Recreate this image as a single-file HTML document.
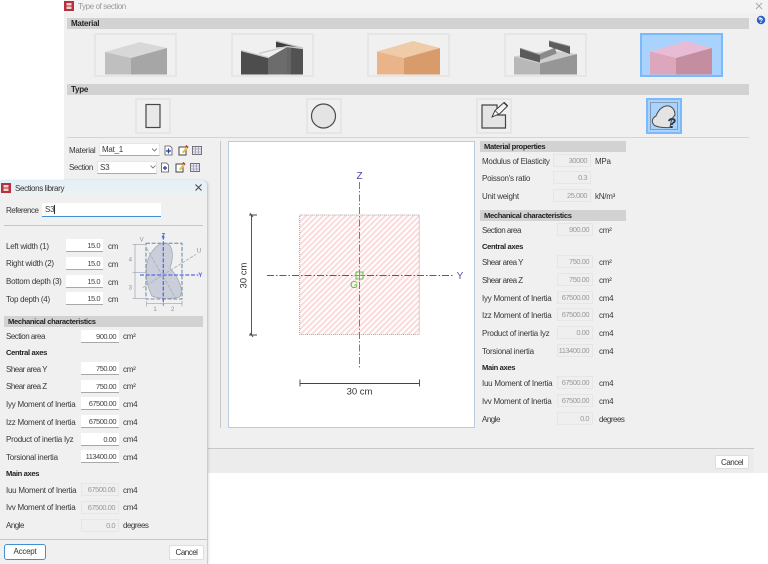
<!DOCTYPE html>
<html><head><meta charset="utf-8"><style>
html,body{margin:0;padding:0;background:#fff;width:768px;height:564px;overflow:hidden}
body{position:relative;font-family:"Liberation Sans",sans-serif;font-size:8px;letter-spacing:-.25px;color:#383838}
div,span{position:absolute;box-sizing:border-box;white-space:nowrap}
.t{line-height:12px;height:12px;margin-top:1px}
.s{letter-spacing:-.5px}
.n{letter-spacing:-.5px}
.b{font-weight:bold;color:#222;font-size:7.6px;letter-spacing:-.35px}
.bar{background:#d2d2d2;font-weight:bold;color:#222;line-height:11px;height:11px;padding-left:4px;font-size:7.6px;letter-spacing:-.35px}
.i{background:#fff;height:13px;line-height:13px;text-align:right;padding-right:3px;border-bottom:1px solid #a8a8a8;color:#444;font-size:7.5px;letter-spacing:-.5px}
.d{background:#efefef;height:13px;line-height:12px;text-align:right;padding-right:3px;border:1px solid #e6e6e6;color:#999;font-size:7.5px;letter-spacing:-.5px}
.tile{border:2px solid #e6e6e6;width:83px;height:44px;top:33px}
.tb{border:2px solid #e6e6e6;width:36px;height:36px;top:98px}
.btn{background:#fff;border:1px solid #ddd;border-radius:2px;text-align:center;color:#333;letter-spacing:-.5px}
svg{position:absolute;overflow:visible;letter-spacing:0}
</style></head><body>
<div id="main" style="left:64px;top:0;width:704px;height:473px;background:#f0f0f0"></div>
<div style="left:64px;top:0;width:704px;height:13px;background:#f3f3f3"></div>
<div class="t" style="left:78px;top:0;color:#999;letter-spacing:-.4px">Type of section</div>
<svg style="left:64px;top:1px" width="10" height="10"><rect width="10" height="10" fill="#b8303c"/><rect x="2.500" y="2" width="5" height="2.500" fill="#f0d0d0"/><rect x="2.500" y="5.500" width="5" height="2.500" fill="#f0d0d0"/></svg>
<svg style="left:755px;top:1px" width="10" height="10"><path d="M1 2l6 6M7 2l-6 6" stroke="#aaa" fill="none"/></svg>
<svg style="left:756px;top:15px" width="10" height="10"><circle cx="5" cy="5" r="4.200" fill="#2a5fc8"/><circle cx="4" cy="3.500" r="1.500" fill="#9cc0f5"/><text x="5" y="8" font-size="7" font-weight="bold" text-anchor="middle" fill="#fff" font-family="Liberation Sans">?</text></svg>

<div class="bar" style="left:67px;top:18px;width:682px;font-size:8px;letter-spacing:-.25px">Material</div>
<div class="bar" style="left:67px;top:84px;width:682px;font-size:8px;letter-spacing:-.25px">Type</div>

<div class="tile" style="left:94px"></div>
<div class="tile" style="left:231px"></div>
<div class="tile" style="left:367px"></div>
<div class="tile" style="left:504px"></div>
<div class="tile" style="left:640px;background:#a9d3fd;border-color:#7cb9fb"></div>

<svg style="left:0;top:0" width="768" height="140">
<polygon points="105,52 140,42 167,48 131,58" fill="#d8d8d8"/><polygon points="105,52 131,58 131,74.500 105,74.500" fill="#bfbfbf"/><polygon points="131,58 167,48 167,74.500 131,74.500" fill="#a6a6a6"/>

<polygon points="276,41.500 303,48.500 287,46.500 276,47.500" fill="#3f3f3f"/>
<polygon points="268,58 287,47 287,74.500 268,74.500" fill="#6c6c6c"/>
<polygon points="241,51 268,58 268,74.500 241,74.500" fill="#4d4d4d"/>
<polygon points="287,47 303,49 303,74.500 287,74.500" fill="#525252"/><rect x="287" y="47" width="4" height="27.500" fill="#666"/>
<path d="M241 50.500L268 57.500M259 53.500L287 46.500L303 48.500M276 41L303 48" stroke="#c8c8c8" stroke-width="1.200" fill="none"/>

<polygon points="377,51.500 413,41 440,48 404,58" fill="#f0cba8"/><polygon points="377,51.500 404,58 404,74.500 377,74.500" fill="#eab48a"/><polygon points="404,58 440,48 440,74.500 404,74.500" fill="#d89c6c"/>

<polygon points="514,56.500 550,50 577,54 540,63.500" fill="#cecece"/><polygon points="514,56.500 540,63.500 540,74.500 514,74.500" fill="#b8b8b8"/><polygon points="540,63.500 577,54 577,74.500 540,74.500" fill="#969696"/>
<polygon points="540,54 555,47.500 556.500,53.500 540,60" fill="#8a8a8a"/>
<polygon points="520,48.500 540,55 540,62.500 520,57" fill="#5a5a5a"/>
<polygon points="549,41 570,46.500 570,54 549,46.500" fill="#5c5c5c"/>
<path d="M520 48.200L540 54.700M549 40.800L570 46.300" stroke="#999" stroke-width="1" fill="none"/>

<polygon points="650,51.500 686,41 712,48 676,58" fill="#e8bcd4"/><polygon points="650,51.500 676,58 676,74.500 650,74.500" fill="#dca6bc"/><polygon points="676,58 712,48 712,74.500 676,74.500" fill="#c58da0"/>
</svg>

<div class="tb" style="left:135px"></div>
<div class="tb" style="left:306px"></div>
<div class="tb" style="left:476px"></div>
<div class="tb" style="left:646px;background:#a9d3fd;border-color:#7cb9fb"></div>

<svg style="left:0;top:0" width="768" height="140">
<rect x="146" y="104.500" width="14" height="23" fill="#e8e8e8" stroke="#4a4540" stroke-width="1.200"/>
<circle cx="323.500" cy="116" r="12" fill="#e4e4e4" stroke="#4a4a48" stroke-width="1.200"/>
<path d="M482 105H497V115H505.500V128H482Z" fill="#e4e4e4" stroke="#444" stroke-width="1.200"/>
<path d="M492 117L495 110.500L504 102.500L507.500 106L500 113.500Z" fill="#f4f4f4" stroke="#333" stroke-width=".9"/><path d="M495 110.500L498.500 114" stroke="#333" stroke-width=".7"/><path d="M504 102.500l3.500 3.500" stroke="#333" stroke-width="1.500"/>
<rect x="650.500" y="102.500" width="27" height="27" fill="#a9d3fd" stroke="#444" stroke-width=".8" stroke-dasharray="1 1"/>
<path d="M666 106C671 105 675 109 675 115C673 117 671 119 670 127.500C664 128 658 127 654.500 125.500C651 122 652 118 656 116C658 111 661 107 666 106Z" fill="#e4e4e4" stroke="#4a4a4a" stroke-width="1"/>
<text x="672" y="128" font-size="15" font-weight="bold" text-anchor="middle" fill="#2c3440" font-family="Liberation Sans">?</text>
<path d="M67 137.500H749" stroke="#d4d4d4" stroke-width="1"/>
</svg>

<div class="t" style="left:69px;top:144px">Material</div>
<div style="left:99px;top:143px;width:61px;height:13px;background:#fff;border:1px solid #e6e6e6;border-bottom-color:#aaa;line-height:12px;padding-left:2px">Mat_1</div>
<div class="t" style="left:69px;top:161px;letter-spacing:-.4px">Section</div>
<div style="left:97px;top:161px;width:60px;height:13px;background:#fff;border:1px solid #e6e6e6;border-bottom-color:#aaa;line-height:12px;padding-left:2px">S3</div>
<svg style="left:0;top:136px" width="210" height="42" fill="none">
<path d="M152 12.500l2.500 2.500 2.500-2.500M150.500 29.500l2.500 2.500 2.500-2.500" stroke="#666" stroke-width=".8"/>
<path d="M165 10h5l2 2v7h-7z" fill="#fff" stroke="#555" stroke-width=".8"/><path d="M168.500 12.500v5M166 15h5" stroke="#223a9a" stroke-width="1.200"/>
<path d="M179 11h7v8h-7z" fill="#fff" stroke="#444"/><path d="M182 16l5-6 1.500 1.500-5 6z" fill="#e8c33a"/><path d="M186 9.500l2 2" stroke="#c0302a" stroke-width="1.500"/>
<rect x="192.500" y="10.500" width="9" height="8" fill="#e6e6f2" stroke="#555" stroke-width=".8"/><path d="M195.500 10.500v8M198.500 10.500v8M192.500 13h9M192.500 16h9" stroke="#8a8ab0" stroke-width=".6"/>
<path d="M161.500 27h5l2 2v7h-7z" fill="#fff" stroke="#555" stroke-width=".8"/><path d="M165 30v4M163 32h4" stroke="#3a4aa8" stroke-width="1.400"/>
<path d="M176 28h7v8h-7z" fill="#fff" stroke="#444"/><path d="M179 33l5-6 1.500 1.500-5 6z" fill="#e8c33a"/><path d="M183 26.500l2 2" stroke="#c0302a" stroke-width="1.500"/>
<rect x="190.500" y="27.500" width="9" height="8" fill="#e6e6f2" stroke="#555" stroke-width=".8"/><path d="M193.500 27.500v8M196.500 27.500v8M190.500 30h9M190.500 33h9" stroke="#8a8ab0" stroke-width=".6"/>
</svg>

<div style="left:220px;top:141px;width:1px;height:287px;background:#c8c8c8"></div>
<div style="left:228px;top:141px;width:247px;height:287px;background:#fff;border:1px solid #b9cbdc"></div>

<svg style="left:0;top:0" width="768" height="564">
<defs><pattern id="h" width="4" height="4" patternUnits="userSpaceOnUse" patternTransform="rotate(45)"><rect width="4" height="4" fill="#fff"/><rect width="2" height="4" fill="#fbdada"/></pattern></defs>
<rect x="299.700" y="215" width="119.500" height="119.500" fill="url(#h)" stroke="#8e8e8e" stroke-width=".8" stroke-dasharray="1 1"/>
<path d="M359.500 182V368" stroke="#6a62b8" stroke-width=".9" stroke-dasharray="7 2 1.500 2" fill="none"/>
<path d="M267 275.500H454" stroke="#5a52a8" stroke-width=".9" stroke-dasharray="7 2 1.500 2" fill="none"/>
<rect x="356" y="272" width="7" height="7" fill="none" stroke="#5cb83c" stroke-width=".9"/><path d="M359.500 270.500v10M354.500 275.500h10" stroke="#5cb83c" stroke-width=".9"/>
<g stroke="#444" fill="none" stroke-width=".9"><path d="M251.500 215V335M249 215h8M249 335h8M250 213l3 4M250 333l3 4"/><path d="M300 383.500H419.500M300 379.500v7M419.500 379.500v7"/></g>
<g font-family="Liberation Sans" font-size="9.500"><text x="359.500" y="179" text-anchor="middle" fill="#4a44a0" font-size="10">Z</text><text x="460" y="279" text-anchor="middle" fill="#5a52a8" font-size="10">Y</text><text x="354" y="288" text-anchor="middle" fill="#5cb83c" font-size="10">G</text><text x="359.500" y="394.500" text-anchor="middle" fill="#333">30 cm</text><text transform="translate(246.500 275.500) rotate(-90)" text-anchor="middle" fill="#333">30 cm</text></g>
</svg>

<div class="bar" style="left:480px;top:141px;width:146px">Material properties</div>
<div class="t" style="left:482px;top:155px">Modulus of Elasticity</div><div class="d" style="left:553px;top:154px;width:38px">30000</div><div class="t" style="left:595px;top:155px">MPa</div>
<div class="t" style="left:482px;top:172px">Poisson's ratio</div><div class="d" style="left:553px;top:171px;width:38px">0.3</div>
<div class="t" style="left:482px;top:190px">Unit weight</div><div class="d" style="left:553px;top:189px;width:38px">25.000</div><div class="t" style="left:595px;top:190px">kN/m³</div>
<div class="bar" style="left:480px;top:210px;width:146px">Mechanical characteristics</div>
<div class="t s" style="left:482px;top:224px">Section area</div><div class="d" style="left:557px;top:223px;width:36px">900.00</div><div class="t" style="left:599px;top:224px">cm²</div>
<div class="t b" style="left:482px;top:240px">Central axes</div>
<div class="t s" style="left:482px;top:256px">Shear area Y</div><div class="d" style="left:557px;top:255px;width:36px">750.00</div><div class="t" style="left:599px;top:256px">cm²</div>
<div class="t s" style="left:482px;top:274px">Shear area Z</div><div class="d" style="left:557px;top:273px;width:36px">750.00</div><div class="t" style="left:599px;top:274px">cm²</div>
<div class="t" style="left:482px;top:292px">Iyy Moment of Inertia</div><div class="d" style="left:557px;top:291px;width:36px">67500.00</div><div class="t" style="left:599px;top:292px">cm4</div>
<div class="t" style="left:482px;top:309px">Izz Moment of Inertia</div><div class="d" style="left:557px;top:308px;width:36px">67500.00</div><div class="t" style="left:599px;top:309px">cm4</div>
<div class="t" style="left:482px;top:327px">Product of inertia Iyz</div><div class="d" style="left:557px;top:326px;width:36px">0.00</div><div class="t" style="left:599px;top:327px">cm4</div>
<div class="t" style="left:482px;top:345px">Torsional inertia</div><div class="d" style="left:557px;top:344px;width:36px">113400.00</div><div class="t" style="left:599px;top:345px">cm4</div>
<div class="t b" style="left:482px;top:361px">Main axes</div>
<div class="t" style="left:482px;top:377px">Iuu Moment of Inertia</div><div class="d" style="left:557px;top:376px;width:36px">67500.00</div><div class="t" style="left:599px;top:377px">cm4</div>
<div class="t" style="left:482px;top:395px">Ivv Moment of Inertia</div><div class="d" style="left:557px;top:394px;width:36px">67500.00</div><div class="t" style="left:599px;top:395px">cm4</div>
<div class="t n" style="left:482px;top:413px">Angle</div><div class="d" style="left:557px;top:412px;width:36px">0.0</div><div class="t n" style="left:599px;top:413px">degrees</div>

<div style="left:208px;top:448px;width:546px;height:25px;background:#ececec;border-top:1px solid #c8c8c8"></div>
<div class="btn" style="left:715px;top:455px;width:34px;height:14px;line-height:13px">Cancel</div>

<!-- Sections library dialog -->
<div style="left:0;top:180px;width:208px;height:384px;background:#f0f0f0;border-right:1px solid #c9cdd0;border-top-right-radius:6px;box-shadow:1px 0 2px rgba(0,0,0,.1)"></div>
<div style="left:0;top:180px;width:207px;height:16px;background:linear-gradient(#e2eff6,#eef2f3);border-top-right-radius:6px"></div>
<svg style="left:1px;top:183px" width="10" height="10"><rect width="10" height="10" fill="#b8303c"/><rect x="2.500" y="2" width="5" height="2.500" fill="#f0d0d0"/><rect x="2.500" y="5.500" width="5" height="2.500" fill="#f0d0d0"/></svg>
<div class="t" style="left:15px;top:182px;color:#333;letter-spacing:-.35px">Sections library</div>
<svg style="left:194px;top:183px" width="10" height="10"><path d="M1.500 1.500l6 6M7.500 1.500l-6 6" stroke="#444" fill="none"/></svg>
<div class="t n" style="left:6px;top:204px">Reference</div>
<div style="left:42px;top:203px;width:119px;height:14px;background:#fff;border-bottom:1.500px solid #3f8fd2;line-height:13px;padding-left:3px">S3<span style="position:static;border-left:1px solid #333;margin-left:0"></span></div>
<div style="left:4px;top:225px;width:199px;height:1px;background:#c6c6c6"></div>

<div class="t" style="left:6px;top:240px">Left width (1)</div><div class="i" style="left:66px;top:239px;width:37px">15.0</div><div class="t" style="left:108px;top:240px">cm</div>
<div class="t" style="left:6px;top:257px">Right width (2)</div><div class="i" style="left:66px;top:257px;width:37px">15.0</div><div class="t" style="left:108px;top:258px">cm</div>
<div class="t" style="left:6px;top:275px">Bottom depth (3)</div><div class="i" style="left:66px;top:275px;width:37px">15.0</div><div class="t" style="left:108px;top:276px">cm</div>
<div class="t" style="left:6px;top:293px">Top depth (4)</div><div class="i" style="left:66px;top:292px;width:37px">15.0</div><div class="t" style="left:108px;top:293px">cm</div>

<svg style="left:120px;top:225px" width="90" height="95" viewBox="0 0 270 285">
<path d="M130 55C155 50 165 85 150 130C175 155 192 195 180 215C165 222 110 222 95 212C80 180 72 140 85 100C95 75 115 55 130 55Z" fill="#c9ced9" stroke="#9aa0ae" stroke-width="2"/>
<path d="M78 55H186V222H78Z" fill="none" stroke="#8aa0b4" stroke-width="4" stroke-dasharray="12 5"/>
<path d="M130 32V240M60 150H235" stroke="#5a6ae8" stroke-width="4" stroke-dasharray="12 5"/>
<path d="M68 188L228 88M80 70L170 225" stroke="#a8adb8" stroke-width="2.500" stroke-dasharray="10 4"/>
<path d="M45 58V220M38 58H75M38 143H75M38 220H75M80 236H186M80 228v16M130 228v16M186 228v16" stroke="#9aa0ae" stroke-width="2" fill="none"/>
<g font-family="Liberation Sans" font-size="18" fill="#8a909c" text-anchor="middle"><text x="65" y="49">V</text><text x="237" y="83">U</text><text x="31" y="110">4</text><text x="31" y="193">3</text><text x="105" y="258">1</text><text x="158" y="258">2</text></g>
<g font-family="Liberation Sans" font-size="18" font-weight="bold" fill="#4a5ae0" text-anchor="middle"><text x="130" y="38">Z</text><text x="241" y="156">Y</text></g>
</svg>

<div class="bar" style="left:4px;top:316px;width:199px">Mechanical characteristics</div>
<div class="t s" style="left:6px;top:330px">Section area</div><div class="i" style="left:81px;top:330px;width:38px">900.00</div><div class="t" style="left:123px;top:330px">cm²</div>
<div class="t b" style="left:6px;top:346px">Central axes</div>
<div class="t s" style="left:6px;top:363px">Shear area Y</div><div class="i" style="left:81px;top:362px;width:38px">750.00</div><div class="t" style="left:123px;top:363px">cm²</div>
<div class="t s" style="left:6px;top:380px">Shear area Z</div><div class="i" style="left:81px;top:380px;width:38px">750.00</div><div class="t" style="left:123px;top:380px">cm²</div>
<div class="t" style="left:6px;top:398px">Iyy Moment of Inertia</div><div class="i" style="left:81px;top:397px;width:38px">67500.00</div><div class="t" style="left:123px;top:398px">cm4</div>
<div class="t" style="left:6px;top:416px">Izz Moment of Inertia</div><div class="i" style="left:81px;top:415px;width:38px">67500.00</div><div class="t" style="left:123px;top:416px">cm4</div>
<div class="t" style="left:6px;top:433px">Product of inertia Iyz</div><div class="i" style="left:81px;top:433px;width:38px">0.00</div><div class="t" style="left:123px;top:433px">cm4</div>
<div class="t" style="left:6px;top:451px">Torsional inertia</div><div class="i" style="left:81px;top:450px;width:38px">113400.00</div><div class="t" style="left:123px;top:451px">cm4</div>
<div class="t b" style="left:6px;top:467px">Main axes</div>
<div class="t" style="left:6px;top:484px">Iuu Moment of Inertia</div><div class="d" style="left:81px;top:483px;width:38px">67500.00</div><div class="t" style="left:123px;top:484px">cm4</div>
<div class="t" style="left:6px;top:501px">Ivv Moment of Inertia</div><div class="d" style="left:81px;top:501px;width:38px">67500.00</div><div class="t" style="left:123px;top:501px">cm4</div>
<div class="t n" style="left:6px;top:519px">Angle</div><div class="d" style="left:81px;top:519px;width:38px">0.0</div><div class="t n" style="left:123px;top:519px">degrees</div>

<div style="left:0;top:539px;width:207px;height:1px;background:#c6c6c6"></div>
<div class="btn" style="left:4px;top:544px;width:42px;height:16px;line-height:14px;border:1.500px solid #3f8fd2;border-radius:3px;letter-spacing:-.25px">Accept</div>
<div class="btn" style="left:169px;top:545px;width:35px;height:15px;line-height:14px">Cancel</div>
</body></html>
